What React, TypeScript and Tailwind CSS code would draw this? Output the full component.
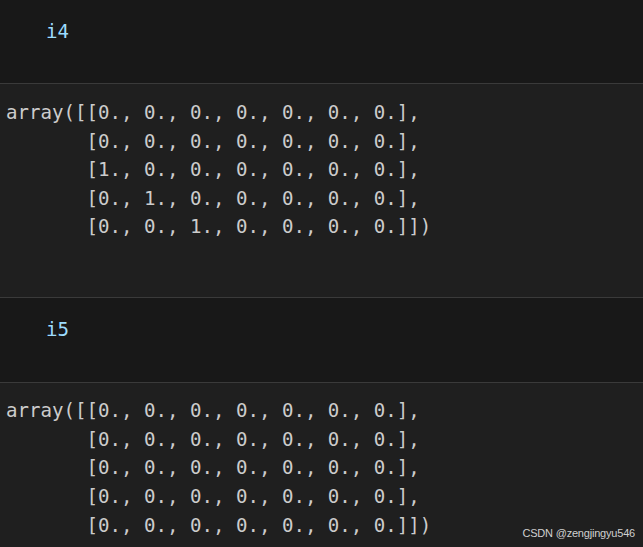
import React from "react";

const mono = { fontFamily: '"DejaVu Sans Mono", "Liberation Mono", monospace' };

const out1 = [
  "array([[0., 0., 0., 0., 0., 0., 0.],",
  "       [0., 0., 0., 0., 0., 0., 0.],",
  "       [1., 0., 0., 0., 0., 0., 0.],",
  "       [0., 1., 0., 0., 0., 0., 0.],",
  "       [0., 0., 1., 0., 0., 0., 0.]])",
];

const out2 = [
  "array([[0., 0., 0., 0., 0., 0., 0.],",
  "       [0., 0., 0., 0., 0., 0., 0.],",
  "       [0., 0., 0., 0., 0., 0., 0.],",
  "       [0., 0., 0., 0., 0., 0., 0.],",
  "       [0., 0., 0., 0., 0., 0., 0.]])",
];

const CodeCell = ({ code, h, pt }: { code: string; h: string; pt: string }) => (
  <div className={`${h} ${pt} bg-[#181818] pl-[46px] border-b border-[#3a3a3a]`}>
    <div className="text-[#9cdcfe] text-[19.1px] leading-[28.6px]" style={mono}>
      {code}
    </div>
  </div>
);

export default function App() {
  return (
    <div className="relative w-[643px] h-[547px] overflow-hidden bg-[#1f1f1f]">
      <CodeCell code="i4" h="h-[84px]" pt="pt-[18px]" />
      <div className="h-[214px] bg-[#1f1f1f] pl-[6px] pt-[15px] border-b border-[#3a3a3a]">
        <pre className="text-[#cccccc] text-[19.1px] leading-[28.6px] m-0" style={mono}>
          {out1.join("\n")}
        </pre>
      </div>
      <CodeCell code="i5" h="h-[85px]" pt="pt-[18px]" />
      <div className="bg-[#1f1f1f] pl-[6px] pt-[14px]">
        <pre className="text-[#cccccc] text-[19.1px] leading-[28.7px] m-0" style={mono}>
          {out2.join("\n")}
        </pre>
      </div>
      <div
        className="absolute right-[8px] bottom-[6px] text-[11px] text-[#d0d0d0] tracking-[-0.2px]"
        style={{ fontFamily: '"Liberation Sans", Arial, sans-serif' }}
      >
        CSDN @zengjingyu546
      </div>
    </div>
  );
}
